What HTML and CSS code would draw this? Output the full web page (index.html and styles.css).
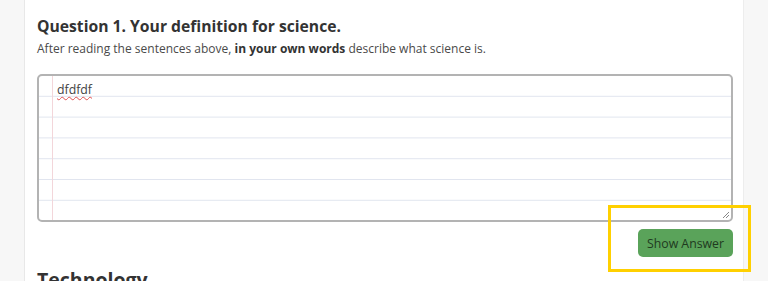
FILE: index.html
```html
<!DOCTYPE html>
<html>
<head>
    <meta charset="UTF-8">
    <meta name="viewport" content="width=device-width, initial-scale=1.0">
    <title>Question 1</title>
    <link rel="stylesheet" href="styles.css">
</head>
<body>
    <div class="page">
      <div class="gutter gutter-left"></div>
      <main class="content">
        <section class="question">
          <h2 class="question-title">Question 1. Your definition for science.</h2>
          <p class="question-hint">After reading the sentences above, <strong>in your own words</strong> describe what science is.</p>
          <div class="answer-box">
            <div class="answer-text"><span class="misspelt">dfdfdf</span></div>
            <svg class="grip" width="8" height="8" viewBox="0 0 8 8">
              <path d="M7 1 L1 7 M7 4 L4 7" stroke="#888" stroke-width="1" fill="none"/>
            </svg>
          </div>
          <div class="answer-actions">
            <button class="show-answer">Show Answer</button>
          </div>
        </section>
        <h2 class="section-title">Technology</h2>
      </main>
      <div class="gutter gutter-right"></div>
    </div>
    <!-- highlight annotation -->
    <div class="highlight"></div>
</body>
</html>
```

FILE: styles.css
```css
body {
  margin: 0;
  font-family: "Open Sans", "Noto Sans", sans-serif;
  color: #333;
  background: #fff;
  overflow: hidden;
}

.page {
  display: flex;
  min-height: 281px;
}

.gutter {
  width: 24px;
  background: #f7f7f7;
  flex-shrink: 0;
}

.gutter-left { border-right: 1px solid #e8e8e8; }
.gutter-right { border-left: 1px solid #ededed; }

.content {
  flex: 1;
  padding: 15px 10px 0 12px;
}

.question-title {
  font-size: 15.7px;
  font-weight: 700;
  line-height: 22px;
  margin: 0 0 3px;
  color: #333;
}

.question-hint {
  font-size: 12px;
  line-height: 17px;
  margin: 0 0 17px;
  color: #4a4a4a;
}

.question-hint strong {
  color: #333;
}

.answer-box {
  position: relative;
  height: 144px;
  border: 2px solid #b3b3b3;
  border-radius: 5px;
  background-color: #fff;
  background-image:
    linear-gradient(to right, transparent 13px, #f3d6da 13px, #f3d6da 14px, transparent 14px),
    linear-gradient(to bottom, transparent calc(100% - 1px), #e1e5ef calc(100% - 1px));
  background-size: 100% 100%, 100% 20.8px;
  background-repeat: no-repeat, repeat-y;
}

.answer-text {
  padding: 5px 0 0 18px;
  font-size: 12.3px;
  line-height: 17px;
  color: #444;
}

.misspelt {
  text-decoration: underline wavy #e05050;
  text-decoration-thickness: 1px;
  text-underline-offset: 2px;
}

.grip {
  position: absolute;
  right: 1px;
  bottom: 1px;
}

.answer-actions {
  display: flex;
  justify-content: flex-end;
  margin-top: 7px;
}

.show-answer {
  height: 28px;
  padding: 0 9px;
  border: none;
  border-radius: 5px;
  background: #5aa35a;
  color: #1f3a1f;
  font-family: "Open Sans", "Noto Sans", sans-serif;
  font-size: 12.3px;
  cursor: pointer;
}

.section-title {
  font-size: 19.5px;
  font-weight: 700;
  margin: 9px 0 0;
  line-height: 28px;
  color: #333;
}

.highlight {
  position: absolute;
  left: 608px;
  top: 205px;
  width: 137px;
  height: 61px;
  border: 3px solid #ffd000;
}
```
